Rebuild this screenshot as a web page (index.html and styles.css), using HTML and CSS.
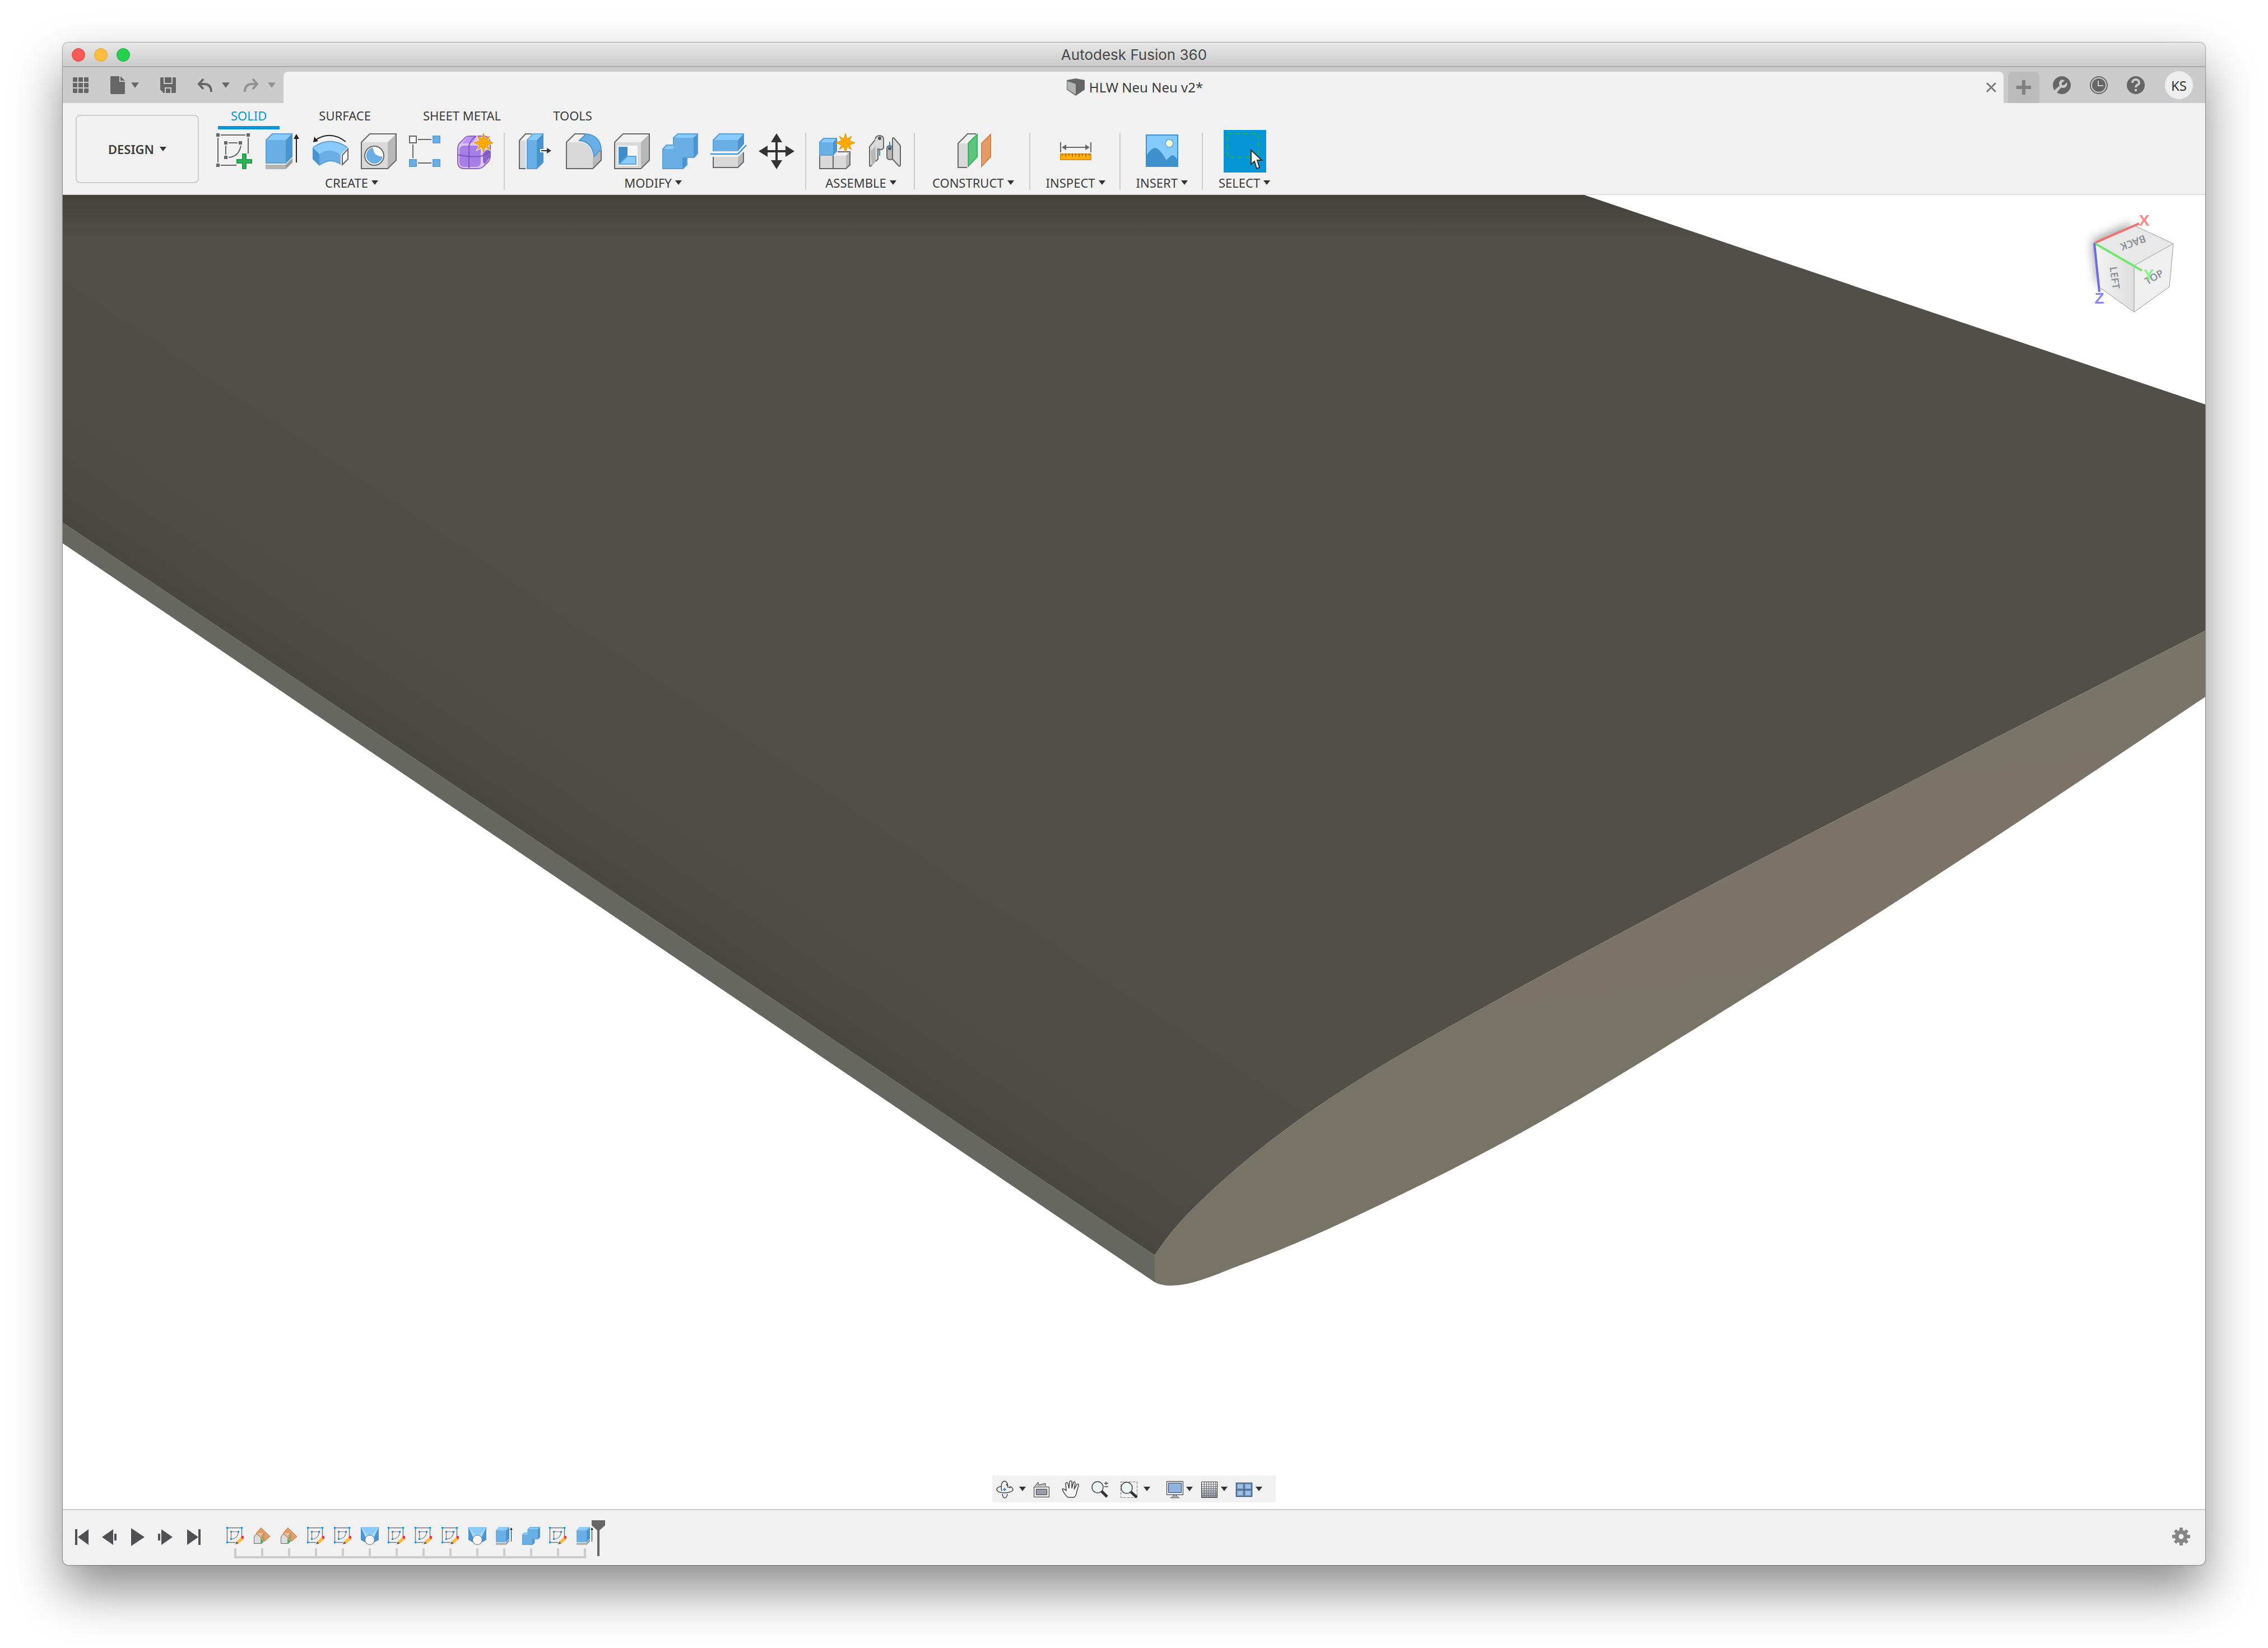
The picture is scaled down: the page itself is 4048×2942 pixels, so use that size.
FILE: index.html
```html
<!DOCTYPE html>
<html lang="en">
<head>
    <meta charset="UTF-8">
    <meta name="viewport" content="width=device-width, initial-scale=1.0">
    <title>Autodesk Fusion 360</title>
    <link rel="stylesheet" href="styles.css">
</head>
<body>
    <!-- shared icons -->
    <svg class="icon-defs" aria-hidden="true">
        <symbol id="caret" viewBox="0 0 12 8"><path d="M0 0H12L6 8Z" fill="currentColor"/></symbol>
        <symbol id="star" viewBox="0 0 34 34">
            <path d="M17 0L20 10L28 5L24 13L34 17L24 21L28 29L20 24L17 34L14 24L6 29L10 21L0 17L10 13L6 5L14 10Z" fill="#ffa800" stroke="#e39400"/>
        </symbol>
        <symbol id="extrude" viewBox="0 0 64 64">
            <path d="M2 12L14 0H50L38 12Z" fill="#8acbff"/>
            <path d="M2 12H38V54H2Z" fill="#69afe5"/>
            <path d="M38 12L50 0V42L38 54Z" fill="#4794cf"/>
            <path d="M3 53V12L14 1H49" fill="none" stroke="#5a9fd6" stroke-width="2"/>
            <path d="M2 53H38" stroke="#5a9fd6" stroke-width="2"/>
            <path d="M2 56H38V64H2Z" fill="#b3b3b3"/>
            <path d="M38 56L50 44V52L38 64Z" fill="#999"/>
            <path d="M57 8V52" stroke="#222" stroke-width="2"/>
            <path d="M57 1L62 10H52Z" fill="#222"/>
        </symbol>
        <symbol id="combine" viewBox="0 0 64 64">
            <path d="M0 28L7 20H20V8L28 0H64V36L57 43H44V56L37 64H0Z" fill="#69afe5"/>
            <path d="M0 28L7 20H20V28ZM20 8L28 0H64L56 8Z" fill="#8acbff"/>
            <path d="M56 8L64 0V36L56 44ZM36 43H44V56L36 64Z" fill="#4794cf"/>
            <path d="M1 28L8 21H20V8L28 1H63V36L57 43H44V56L37 63H1Z" fill="none" stroke="#5a9fd6" stroke-width="2"/>
        </symbol>
        <symbol id="t-sketch" viewBox="0 0 32 32">
            <path d="M3 1.500H26M1.500 3V26M27.500 3V18M3 27.500H16" fill="none" stroke="#777" stroke-width="1.500"/>
            <path d="M10 8.500H20M8.500 10V20M21.500 10Q20 20 10 21.500" fill="none" stroke="#777" stroke-width="1.200"/>
            <path d="M0 0H3V3H0ZM26 0H29V3H26ZM0 26H3V29H0ZM7 7H10V10H7ZM20 7H23V10H20ZM7 20H10V23H7Z" fill="#1292ef"/>
            <path d="M18 26L26 18L30 22L22 30Z" fill="#fdb93a"/>
            <path d="M26 18Q29 14 31 17Q32 20 29 22Z" fill="#f23030"/>
            <path d="M18 26L22 29L16 31Z" fill="#555"/>
        </symbol>
        <symbol id="t-plane" viewBox="0 0 32 32">
            <path d="M1.500 29.500V18L5 13H14V29.500Z" fill="#ddd" stroke="#666"/>
            <path d="M14 1L30 17L20 26L5 11Z" fill="#e69a66" stroke="#cf8550"/>
            <path d="M7 11H20L14 18Z" fill="#e8c5ac"/>
            <path d="M20 11V26L14 18Z" fill="#93a96b"/>
            <path d="M14 16L20 10M14 22L18 26L14 30Z" fill="#45b86e" stroke="#2fae5d"/>
        </symbol>
        <symbol id="t-loft" viewBox="0 0 32 32">
            <path d="M0 0H32V23L25 27H7L0 23Z" fill="#4794cf"/>
            <path d="M0 0H32L22 16H10Z" fill="#8acbff"/>
            <path d="M0 0L10 22L14 15ZM32 0L22 22L18 15Z" fill="#a5d8ff"/>
            <circle cx="16" cy="23" r="8.500" fill="#f5f5f5" stroke="#666"/>
        </symbol>
        <symbol id="t-extrude" viewBox="0 0 32 32">
            <path d="M1 6L6 0H25L19 6Z" fill="#8acbff"/>
            <path d="M1 6H19V27H1Z" fill="#69afe5"/>
            <path d="M19 6L25 0V21L19 27Z" fill="#4794cf"/>
            <path d="M1 28H19V32H1Z" fill="#b3b3b3"/>
            <path d="M19 28L25 22V26L19 32Z" fill="#999"/>
            <path d="M28.500 3V26" stroke="#222"/>
            <path d="M28.500 1L31 5H26Z" fill="#222"/>
        </symbol>
    </svg>

    <div class="window">
        <header class="titlebar">
            <div class="lights">
                <button class="light light-close" aria-label="Close window"></button>
                <button class="light light-min" aria-label="Minimize window"></button>
                <button class="light light-max" aria-label="Zoom window"></button>
            </div>
            <h1>Autodesk Fusion 360</h1>
        </header>

        <div class="appbar">
            <div class="quick">
                <button aria-label="Data panel">
                    <svg class="icon-32" viewBox="0 0 32 32"><path d="M4 2H10V10H2V4Q2 2 4 2ZM12 2H20V10H12ZM22 2H28Q30 2 30 4V10H22ZM2 12H10V20H2ZM12 12H20V20H12ZM22 12H30V20H22ZM2 22H10V30H4Q2 30 2 28ZM12 22H20V30H12ZM22 22H30V28Q30 30 28 30H22Z" fill="#666"/></svg>
                </button>
                <button class="file-button" aria-label="File">
                    <svg class="icon-32" viewBox="0 0 32 32"><path d="M5 0H19V10H29V30Q29 32 27 32H5Q3 32 3 30V2Q3 0 5 0ZM21 0L29 8H21Z" fill="#666"/></svg>
                    <svg class="caret-big"><use href="#caret"/></svg>
                </button>
                <button aria-label="Save">
                    <svg class="icon-32" viewBox="0 0 32 32">
                        <path d="M4 2H28Q30 2 30 4V28Q30 30 28 30H8L2 24V4Q2 2 4 2Z" fill="#666"/>
                        <path d="M9 2V13H23V2M11 30V21H21V30" fill="none" stroke="#ccc" stroke-width="2"/>
                    </svg>
                </button>
                <div class="history">
                    <button aria-label="Undo">
                        <svg class="icon-32" viewBox="0 0 32 32"><path d="M13 5L5 14L13 23M5 14H14C23 14 27 19 27 28" fill="none" stroke="#666" stroke-width="4"/></svg>
                        <svg class="caret-big"><use href="#caret"/></svg>
                    </button>
                    <button class="faded" aria-label="Redo">
                        <svg class="icon-32" viewBox="0 0 32 32"><path d="M19 5L27 14L19 23M27 14H18C9 14 5 19 5 28" fill="none" stroke="#929292" stroke-width="4"/></svg>
                        <svg class="caret-big"><use href="#caret"/></svg>
                    </button>
                </div>
            </div>
            <div class="doc-tab">
                <div class="doc-title">
                    <svg class="icon-32" viewBox="0 0 32 32">
                        <path d="M0 3L16 0L32 3V20L16 31L0 20Z" fill="#666"/>
                        <path d="M1 5L16 10V29L1 19Z" fill="#b3b5b5"/>
                    </svg>
                    <span>HLW Neu Neu v2*</span>
                </div>
                <button class="doc-close" aria-label="Close document">
                    <svg viewBox="0 0 18 18"><path d="M2 2L16 16M16 2L2 16" stroke="#777" stroke-width="3" stroke-linecap="round"/></svg>
                </button>
            </div>
            <button class="new-tab" aria-label="New tab">
                <svg viewBox="0 0 26 26"><path d="M10 0H16V10H26V16H16V26H10V16H0V10H10Z" fill="#808080"/></svg>
            </button>
            <div class="account">
                <button aria-label="Extensions">
                    <svg class="icon-32" viewBox="0 0 32 32">
                        <circle cx="16" cy="16" r="16" fill="#666"/>
                        <path d="M0 32L4 24L12 17Q9 11 14 7Q18 5 21 8L16 12V16H20L25 11Q27 17 22 20Q18 22 15 20L8 28L6 32Z" fill="#ccc"/>
                    </svg>
                </button>
                <button aria-label="Job status">
                    <svg class="icon-32" viewBox="0 0 32 32">
                        <circle cx="16" cy="16" r="15" fill="none" stroke="#666" stroke-width="2"/>
                        <circle cx="16" cy="16" r="12" fill="#666"/>
                        <path d="M15 8V17H24" fill="none" stroke="#ccc" stroke-width="2"/>
                    </svg>
                </button>
                <button aria-label="Help">
                    <svg class="icon-32" viewBox="0 0 32 32">
                        <circle cx="16" cy="16" r="16" fill="#666"/>
                        <path d="M10 12C10 4 22 4 22 12C22 16 16 15 16 20" fill="none" stroke="#ccc" stroke-width="4"/>
                        <path d="M14 23H18V27H14Z" fill="#ccc"/>
                    </svg>
                </button>
                <button class="avatar">KS</button>
            </div>
        </div>

        <div class="ribbon">
            <button class="workspace">DESIGN <svg class="caret"><use href="#caret"/></svg></button>
            <div class="ribbon-main">
                <nav class="ribbon-tabs">
                    <a href="#solid" class="active">SOLID</a>
                    <a href="#surface">SURFACE</a>
                    <a href="#sheet-metal">SHEET METAL</a>
                    <a href="#tools">TOOLS</a>
                </nav>
                <div class="ribbon-groups">
                    <section class="group group-wide">
                        <div class="group-icons">
                            <button aria-label="Create sketch">
                                <svg viewBox="0 0 64 64">
                                    <path d="M8 3H52M3 8V52M57 8V36M8 57H36M22 17H38M17 22V38M44 22Q40 42 22 43" fill="none" stroke="#666" stroke-width="2"/>
                                    <path d="M0 0H6V6H0ZM54 0H60V6H54ZM0 54H6V60H0ZM14 14H20V20H14ZM40 14H46V20H40ZM14 40H20V46H14Z" fill="#666"/>
                                    <path d="M47 37H53V47H63V53H53V63H47V53H37V47H47Z" fill="#2bb35a" stroke="#1f9e47" stroke-width="2"/>
                                </svg>
                            </button>
                            <button aria-label="Extrude"><svg><use href="#extrude"/></svg></button>
                            <button aria-label="Revolve">
                                <svg viewBox="0 0 64 64">
                                    <path d="M0 25Q31 3 63 25L50 38Q31 23 12 37Z" fill="#8acbff"/>
                                    <path d="M12 37Q31 23 50 38V56Q31 43 12 58Z" fill="#69afe5"/>
                                    <path d="M0 25L12 37V58L0 46Z" fill="#4794cf"/>
                                    <path d="M1 25Q31 4 62 25M12 57Q31 42 50 55" fill="none" stroke="#5a9fd6" stroke-width="2"/>
                                    <path d="M53 39L63 28V46L53 56Z" fill="#fff" stroke="#666" stroke-width="2"/>
                                    <path d="M59 15Q32 -6 5 12" fill="none" stroke="#222" stroke-width="2"/>
                                    <path d="M1 16L3 6L10 14Z" fill="#222"/>
                                </svg>
                            </button>
                            <button aria-label="Hole">
                                <svg viewBox="0 0 64 64">
                                    <path d="M1 16L16 1H63V48L48 63H1Z" fill="#f1f1f1"/>
                                    <path d="M1 16H48V63H1Z" fill="#d9d9d9"/>
                                    <path d="M48 16L63 1V48L48 63Z" fill="#b8b8b8"/>
                                    <path d="M1 16L16 1H63V48L48 63H1Z" fill="none" stroke="#666" stroke-width="2"/>
                                    <circle cx="24" cy="40" r="17" fill="#fff" stroke="#666" stroke-width="2"/>
                                    <path d="M21 26A14 14 0 1 0 38 42C28 42 22 36 21 26Z" fill="#69afe5" stroke="#5a9fd6"/>
                                </svg>
                            </button>
                            <button aria-label="Pattern">
                                <svg viewBox="0 0 64 64">
                                    <path d="M16 11H40M7 20V44M16 53H40" stroke="#666" stroke-width="2"/>
                                    <path d="M1 5H13V17H1Z" fill="#fff" stroke="#666" stroke-width="2"/>
                                    <path d="M43 5H55V17H43ZM1 47H13V59H1ZM43 47H55V59H43Z" fill="#69afe5" stroke="#5a9fd6" stroke-width="2"/>
                                </svg>
                            </button>
                            <button aria-label="Create form">
                                <svg viewBox="0 0 64 64">
                                    <path d="M1 28Q1 20 6 16L15 7Q18 5 22 5H50Q59 8 59 18V42Q59 46 56 50L46 60Q42 63 38 63H13Q1 63 1 51Z" fill="#dcc6f7" stroke="#8f63c4" stroke-width="2"/>
                                    <path d="M8 18L16 9Q19 6 24 6H34Q30 17 24 18Z" fill="#bf93ff"/>
                                    <rect x="4" y="22" width="38" height="38" rx="8" fill="#a77de6"/>
                                    <path d="M46 34L59 26V42L50 54Q46 55 46 48Z" fill="#8b62c9"/>
                                    <path d="M1 38Q20 43 42 41Q52 38 58 32M21 62V24Q22 12 34 5" fill="none" stroke="#7f55b8" stroke-width="2"/>
                                    <path d="M47 -2L51 9L61 3L56 13L66 17L56 22L60 32L51 27L47 36L43 27L33 32L38 22L28 17L38 13L33 3L43 9Z" fill="#f1f1f1"/>
                                    <use href="#star" x="30" y="0" width="34" height="34"/>
                                </svg>
                            </button>
                        </div>
                        <button class="group-label">CREATE <svg class="caret"><use href="#caret"/></svg></button>
                    </section>
                    <section class="group group-wide">
                        <div class="group-icons">
                            <button aria-label="Press pull">
                                <svg viewBox="0 0 64 64">
                                    <path d="M3 13H14V63H3Z" fill="#d9d9d9"/>
                                    <path d="M14 63H3V13L14 1H25" fill="none" stroke="#666" stroke-width="2"/>
                                    <path d="M16 12L27 0H46L34 12Z" fill="#8acbff"/>
                                    <path d="M16 12H34V64H16Z" fill="#69afe5"/>
                                    <path d="M34 12L46 0V52L34 64Z" fill="#4794cf"/>
                                    <path d="M17 63V12L27 1H45V52L34 63Z" fill="none" stroke="#4f97d0" stroke-opacity=".6" stroke-width="2"/>
                                    <path d="M40 28H47V34H40Z" fill="#fff"/>
                                    <path d="M42 31H54" stroke="#333" stroke-width="2"/>
                                    <path d="M52 26L60 31L52 36Z" fill="#333"/>
                                </svg>
                            </button>
                            <button aria-label="Fillet">
                                <svg viewBox="0 0 64 64">
                                    <path d="M48 44L63 29V48L48 63Z" fill="#b8b8b8"/>
                                    <path d="M1 16H24C40 16 48 30 48 44V63H1Z" fill="#d9d9d9"/>
                                    <path d="M34 1H16L1 16V63H48L63 48V30" fill="none" stroke="#666" stroke-width="2"/>
                                    <path d="M36 1C54 3 62 14 63 28L50 42C49 28 42 14 24 13Z" fill="#69afe5" stroke="#4f97d0" stroke-width="2"/>
                                </svg>
                            </button>
                            <button aria-label="Shell">
                                <svg viewBox="0 0 64 64">
                                    <path d="M1 16L16 1H63V48L48 63H1Z" fill="#f1f1f1"/>
                                    <path d="M1 16H48V63H1Z" fill="#d9d9d9"/>
                                    <path d="M48 16L63 1V48L48 63Z" fill="#b8b8b8"/>
                                    <path d="M1 16L16 1H63V48L48 63H1Z" fill="none" stroke="#666" stroke-width="2"/>
                                    <path d="M6 22H42V58H6Z" fill="#f6f6f6"/>
                                    <path d="M8 24H24V40L8 56Z" fill="#3f8cc8"/>
                                    <path d="M9 55L24 41H39V55Z" fill="#8acbff" stroke="#5fa9e0" stroke-width="2"/>
                                </svg>
                            </button>
                            <button aria-label="Combine"><svg><use href="#combine"/></svg></button>
                            <button aria-label="Split body">
                                <svg viewBox="0 0 64 64">
                                    <path d="M4 12L16 0H60L49 12Z" fill="#8acbff"/>
                                    <path d="M4 12H49V32H4Z" fill="#69afe5"/>
                                    <path d="M49 12L60 0V19L49 32Z" fill="#4794cf"/>
                                    <path d="M5 32V12L16 1H59" fill="none" stroke="#5a9fd6" stroke-width="2"/>
                                    <path d="M5 42H49V61H5Z" fill="#d9d9d9"/>
                                    <path d="M49 42L59 33V51L49 61Z" fill="#b8b8b8"/>
                                    <path d="M5 42V61H49L59 51V34" fill="none" stroke="#666" stroke-width="2"/>
                                    <path d="M0 37H49L64 21" fill="none" stroke="#1c8fe6" stroke-width="2"/>
                                </svg>
                            </button>
                            <button aria-label="Move">
                                <svg viewBox="0 0 64 64">
                                    <path d="M32 8V56M8 32H56" stroke="#333" stroke-width="4"/>
                                    <path d="M32 0L42 16H22ZM32 64L42 48H22ZM0 32L16 22V42ZM64 32L48 22V42Z" fill="#333"/>
                                </svg>
                            </button>
                        </div>
                        <button class="group-label">MODIFY <svg class="caret"><use href="#caret"/></svg></button>
                    </section>
                    <section class="group">
                        <div class="group-icons">
                            <button aria-label="New component">
                                <svg viewBox="0 0 64 64">
                                    <path d="M1 40H25L33 33H56V56L48 63H1Z" fill="#d9d9d9"/>
                                    <path d="M25 40L33 33H55L48 40Z" fill="#f1f1f1"/>
                                    <path d="M48 40L55 33V56L48 63Z" fill="#b8b8b8"/>
                                    <path d="M1 40V63H48L55 56V33H33M25 40V63" fill="none" stroke="#666" stroke-width="2"/>
                                    <path d="M0 16L8 8H32L25 16Z" fill="#8acbff"/>
                                    <path d="M0 16H25V40H0Z" fill="#69afe5"/>
                                    <path d="M25 16L32 8V32L25 40Z" fill="#4794cf"/>
                                    <path d="M1 39V16L8 9H31M1 39H25" fill="none" stroke="#5a9fd6" stroke-width="2"/>
                                    <use href="#star" x="30" y="0" width="34" height="34"/>
                                </svg>
                            </button>
                            <button aria-label="Joint">
                                <svg viewBox="0 0 64 64">
                                    <path d="M4 24L16 9V47L7 58Q4 60 4 57Z" fill="#d9d9d9" stroke="#666" stroke-width="2"/>
                                    <path d="M6 32L19 18V46L8 58Z" fill="#b8b8b8"/>
                                    <path d="M14 10Q16 4 22 4Q29 5 29 10V26Q28 29 24 29L19 28V46L15 50" fill="#d9d9d9" stroke="#666" stroke-width="2"/>
                                    <circle cx="22" cy="9" r="3" fill="#555"/>
                                    <path d="M45 9Q46 7 48 9L59 22V57Q58 60 56 58L45 46Z" fill="#d9d9d9" stroke="#666" stroke-width="2"/>
                                    <path d="M35 26Q36 22 40 22Q45 23 45 26V46Q41 48 37 46Q35 45 35 42Z" fill="#b8b8b8" stroke="#666" stroke-width="2"/>
                                    <circle cx="40" cy="27" r="3" fill="#555"/>
                                    <path d="M22 29V40M40 15V26" stroke="#1c8fe6" stroke-width="2"/>
                                </svg>
                            </button>
                        </div>
                        <button class="group-label">ASSEMBLE <svg class="caret"><use href="#caret"/></svg></button>
                    </section>
                    <section class="group group-construct">
                        <div class="group-icons">
                            <button aria-label="Offset plane">
                                <svg viewBox="0 0 64 64">
                                    <path d="M5 18H21V61H5Z" fill="#d9d9d9"/>
                                    <path d="M21 61H5V18L22 1H37" fill="none" stroke="#666" stroke-width="2"/>
                                    <path d="M23 18L39 2V42L23 59Z" fill="#5ac77d" stroke="#3fae65" stroke-width="2"/>
                                    <path d="M47 18L63 2V42L47 59Z" fill="#e69a66" stroke="#cf8550" stroke-width="2"/>
                                </svg>
                            </button>
                        </div>
                        <button class="group-label">CONSTRUCT <svg class="caret"><use href="#caret"/></svg></button>
                    </section>
                    <section class="group">
                        <div class="group-icons">
                            <button aria-label="Measure">
                                <svg viewBox="0 0 64 64">
                                    <path d="M5 16V34M59 16V34M12 25H52" stroke="#666" stroke-width="2"/>
                                    <path d="M7 25L15 20V30ZM57 25L49 20V30Z" fill="#666"/>
                                    <path d="M5 37H59V47H5Z" fill="#ffae0c" stroke="#e39400" stroke-width="2"/>
                                    <path d="M8 36V40M14 36V42M20 36V40M26 36V42M32 36V40M38 36V42M44 36V40M50 36V42M56 36V40" stroke="#444"/>
                                </svg>
                            </button>
                        </div>
                        <button class="group-label">INSPECT <svg class="caret"><use href="#caret"/></svg></button>
                    </section>
                    <section class="group">
                        <div class="group-icons">
                            <button aria-label="Insert image">
                                <svg viewBox="0 0 64 64">
                                    <path d="M3 2H61V60H3Z" fill="#85caff"/>
                                    <path d="M3 42Q12 26 20 26Q28 27 40 48Q48 38 52 39Q57 42 61 50V60H3Z" fill="#3d92ce"/>
                                    <path d="M4 42V3H60V50" fill="none" stroke="#3d92ce" stroke-width="2"/>
                                    <circle cx="45" cy="18" r="7" fill="#fffbc8" stroke="#69afe5" stroke-width="2"/>
                                </svg>
                            </button>
                        </div>
                        <button class="group-label">INSERT <svg class="caret"><use href="#caret"/></svg></button>
                    </section>
                    <section class="group">
                        <div class="group-icons">
                            <button class="selected" aria-label="Select">
                                <svg viewBox="0 0 76 76">
                                    <rect x="7" y="7" width="55" height="42" fill="none" stroke="#23b33f" stroke-width="2" stroke-dasharray="8 6"/>
                                    <path d="M49 36V61L55 56L59 69L64 67L60 54H68Z" fill="#fff" stroke="#333" stroke-width="2"/>
                                </svg>
                            </button>
                        </div>
                        <button class="group-label">SELECT <svg class="caret"><use href="#caret"/></svg></button>
                    </section>
                </div>
            </div>
        </div>

        <main class="viewport">
            <svg class="model" viewBox="0 0 3824 2346" role="img" aria-label="Wing model">
                <defs>
                    <linearGradient id="skin" gradientUnits="userSpaceOnUse" x1="975" y1="1239" x2="1210" y2="889">
                        <stop offset="0" stop-color="#494742"/>
                        <stop offset=".4" stop-color="#4e4d47"/>
                        <stop offset="1" stop-color="#524f48"/>
                    </linearGradient>
                    <linearGradient id="topshade" x1="0" y1="0" x2="0" y2="1">
                        <stop offset="0" stop-color="#44413b"/>
                        <stop offset="1" stop-color="#44413b" stop-opacity="0"/>
                    </linearGradient>
                    <linearGradient id="section" gradientUnits="userSpaceOnUse" x1="3447" y1="945" x2="3509" y2="1420">
                        <stop offset=".1" stop-color="#787468"/>
                        <stop offset=".25" stop-color="#7b7367"/>
                        <stop offset=".78" stop-color="#7b7367"/>
                        <stop offset=".84" stop-color="#777367"/>
                    </linearGradient>
                </defs>
                <path d="M0 585L1949 1893V1941L0 622Z" fill="#666761"/>
                <path d="M1949 1893C1981 1844 2013 1813 2045 1783C2118 1715 2190 1660 2263 1612C2358 1549 2453 1497 2548 1444C2663 1380 2778 1319 2893 1258C3014 1194 3136 1131 3257 1069C3446 971 3635 874 3824 778V374L2715 0H0V585Z" fill="url(#skin)"/>
                <path d="M0 0H2715L2952 80H0Z" fill="url(#topshade)"/>
                <path d="M1949 1893C1981 1844 2013 1813 2045 1783C2118 1715 2190 1660 2263 1612C2358 1549 2453 1497 2548 1444C2663 1380 2778 1319 2893 1258C3014 1194 3136 1131 3257 1069C3446 971 3635 874 3824 778V896C3696 982 3567 1069 3439 1153C3293 1249 3148 1342 3002 1433C2869 1516 2736 1600 2603 1674C2498 1732 2392 1784 2287 1833C2227 1861 2166 1887 2106 1909C2063 1925 2018 1947 1978 1947Q1960 1947 1949 1941Z" fill="url(#section)"/>
            </svg>

            <svg class="viewcube" viewBox="0 0 200 200" role="img" aria-label="View cube">
                <defs>
                    <filter id="cube-shadow" x="-50%" y="-50%" width="200%" height="200%"><feGaussianBlur stdDeviation="9"/></filter>
                    <linearGradient id="cube-left"><stop offset="0" stop-color="#f4f4f4"/><stop offset="1" stop-color="#dedede"/></linearGradient>
                </defs>
                <path d="M34 60L104 28L100 100L44 140Z" fill="#000" opacity=".4" filter="url(#cube-shadow)"/>
                <path d="M38 64L110 33L179 65L109 104Z" fill="#e8e8e8"/>
                <path d="M38 64L109 104V187L46 142Z" fill="url(#cube-left)"/>
                <path d="M109 104L179 65L172 142L109 187Z" fill="#efefef"/>
                <path d="M110 33L179 65L172 142L109 187L46 142M109 104L179 65M109 104V187" fill="none" stroke="#999" stroke-width="1"/>
                <g class="cube-face">
                    <text transform="translate(107 63) rotate(160)" y="6">BACK</text>
                    <text transform="translate(74 126) rotate(82)" y="6">LEFT</text>
                    <text transform="translate(145 125) rotate(-30)" y="6">TOP</text>
                </g>
                <path d="M38 64L118 29" stroke="#f07070" stroke-width="4"/>
                <path d="M38 64L123 113" stroke="#6fe86f" stroke-width="4"/>
                <path d="M38 64L47 151" stroke="#6a6aee" stroke-width="4"/>
                <g class="cube-axis">
                    <text x="127" y="33" fill="#ff8585">X</text>
                    <text x="135" y="130" fill="#85f585">Y</text>
                    <text x="47" y="172" fill="#8585ff">Z</text>
                </g>
            </svg>

            <div class="navbar">
                <div class="nav-set">
                    <button aria-label="Orbit">
                        <svg class="icon-32" viewBox="0 0 32 32">
                            <path d="M11 11Q2 13 2 17Q3 23 16 23Q31 22 31 17Q30 13 26 12M11 20Q8 3 16 2Q22 3 22 14M12 25Q13 32 16 32Q20 32 21 25" fill="none" stroke="#444" stroke-width="1.500"/>
                            <path d="M16 14V20M13 17H19" stroke="#1080e0" stroke-width="1.500"/>
                            <path d="M18 8L22 7L21 11ZM23 13L27 11L26 15Z" fill="#333"/>
                        </svg>
                        <svg class="caret"><use href="#caret"/></svg>
                    </button>
                    <div class="nav-plain">
                        <button aria-label="Look at">
                            <svg class="icon-32" viewBox="0 0 32 32">
                                <path d="M4 11L10 4L11 9L23 6V11" fill="#bbb" stroke="#444"/>
                                <path d="M2.500 12.500H29.500V30.500H2.500Z" fill="#e8e8e8" stroke="#333"/>
                                <path d="M6.500 16.500H25.500V26.500H6.500Z" fill="#9a9da6" stroke="#444"/>
                            </svg>
                        </button>
                        <button aria-label="Pan">
                            <svg class="icon-32" viewBox="0 0 32 32"><path d="M11 31Q5 26 1 17Q2 14 8 19L7 6Q9 3 11 6L13 15L14 3Q16 0 18 3V15L21 4Q24 2 24 6L22 17L27 8Q31 6 30 10L27 20Q26 28 22 31Z" fill="#f8f8fa" stroke="#444" stroke-width="1.500"/></svg>
                        </button>
                        <button aria-label="Zoom">
                            <svg class="icon-32" viewBox="0 0 32 32">
                                <path d="M19 20L29 30" stroke="#333" stroke-width="5"/>
                                <circle cx="12" cy="13" r="10" fill="#e8f4f4" stroke="#444" stroke-width="1.500"/>
                                <path d="M27 3V9M24 6H31M24 12H31" stroke="#444" stroke-width="1.500"/>
                            </svg>
                        </button>
                        <button aria-label="Fit">
                            <svg class="icon-32" viewBox="0 0 32 32">
                                <rect x="1.500" y="3.500" width="29" height="28" fill="none" stroke="#777" stroke-dasharray="5 2"/>
                                <path d="M19 21L30 31" stroke="#333" stroke-width="5"/>
                                <circle cx="12" cy="14" r="10" fill="#e8f4f4" stroke="#444" stroke-width="1.500"/>
                            </svg>
                            <svg class="caret"><use href="#caret"/></svg>
                        </button>
                    </div>
                </div>
                <div class="nav-set nav-display">
                    <button aria-label="Display settings">
                        <svg class="icon-32" viewBox="0 0 32 32">
                            <path d="M13 26H19V29L24 32H8L13 29Z" fill="#aab" stroke="#666"/>
                            <path d="M1.500 2.500H30.500V26.500H1.500Z" fill="#e4e6ea" stroke="#333"/>
                            <path d="M4.500 5.500H27.500V22.500H4.500Z" fill="#8fb3dc" stroke="#28456f"/>
                        </svg>
                        <svg class="caret"><use href="#caret"/></svg>
                    </button>
                    <button aria-label="Grid and snaps">
                        <svg class="icon-32" viewBox="0 0 32 32">
                            <defs><linearGradient id="gridfill" x1="0" y1="0" x2="0" y2="1"><stop offset="0" stop-color="#fff"/><stop offset="1" stop-color="#8e919c"/></linearGradient></defs>
                            <path d="M1.500 3.500H29.500V31.500H1.500Z" fill="url(#gridfill)"/>
                            <path d="M6.500 3V31M10.500 3V31M14.500 3V31M18.500 3V31M22.500 3V31M26.500 3V31M1 7.500H29M1 11.500H29M1 15.500H29M1 19.500H29M1 23.500H29M1 27.500H29" stroke="#777"/>
                            <path d="M1.500 3.500H29.500V31.500H1.500Z" fill="none" stroke="#333"/>
                        </svg>
                        <svg class="caret"><use href="#caret"/></svg>
                    </button>
                    <button aria-label="Viewports">
                        <svg class="icon-32" viewBox="0 0 32 32">
                            <path d="M1.500 5.500H29.500V29.500H1.500ZM15.500 5V30M1 17.500H30" fill="#8fb3dc" stroke="#2c4a78" stroke-width="1.500"/>
                            <path d="M3.500 7.500H13.500V15.500H3.500ZM17.500 7.500H27.500V15.500H17.500ZM3.500 19.500H13.500V27.500H3.500ZM17.500 19.500H27.500V27.500H17.500Z" fill="#a3c0e2" stroke="#6f93c2"/>
                        </svg>
                        <svg class="caret"><use href="#caret"/></svg>
                    </button>
                </div>
            </div>
        </main>

        <footer class="timeline">
            <div class="playback">
                <button aria-label="Go to start"><svg class="icon-32" viewBox="0 0 32 32"><path d="M4 2H8V30H4ZM28 2V30L9 16Z" fill="#505052"/></svg></button>
                <button aria-label="Step back"><svg class="icon-32" viewBox="0 0 32 32"><path d="M2 16L22 2V30ZM24 10H28V22H24Z" fill="#505052"/></svg></button>
                <button aria-label="Play"><svg class="icon-32" viewBox="0 0 32 32"><path d="M4 0L28 16L4 32Z" fill="#505052"/></svg></button>
                <button aria-label="Step forward"><svg class="icon-32" viewBox="0 0 32 32"><path d="M2 10H6V22H2ZM8 2L28 16L8 30Z" fill="#505052"/></svg></button>
                <button aria-label="Go to end"><svg class="icon-32" viewBox="0 0 32 32"><path d="M4 2L24 16L4 30ZM24 2H28V30H24Z" fill="#505052"/></svg></button>
            </div>
            <ol class="features">
                <li><svg class="icon-32"><use href="#t-sketch"/></svg></li>
                <li><svg class="icon-32"><use href="#t-plane"/></svg></li>
                <li><svg class="icon-32"><use href="#t-plane"/></svg></li>
                <li><svg class="icon-32"><use href="#t-sketch"/></svg></li>
                <li><svg class="icon-32"><use href="#t-sketch"/></svg></li>
                <li><svg class="icon-32"><use href="#t-loft"/></svg></li>
                <li><svg class="icon-32"><use href="#t-sketch"/></svg></li>
                <li><svg class="icon-32"><use href="#t-sketch"/></svg></li>
                <li><svg class="icon-32"><use href="#t-sketch"/></svg></li>
                <li><svg class="icon-32"><use href="#t-loft"/></svg></li>
                <li><svg class="icon-32"><use href="#t-extrude"/></svg></li>
                <li><svg class="icon-32"><use href="#combine"/></svg></li>
                <li><svg class="icon-32"><use href="#t-sketch"/></svg></li>
                <li><svg class="icon-32"><use href="#t-extrude"/></svg></li>
            </ol>
            <svg class="marker" viewBox="0 0 24 64"><path d="M0 0H24V9L14 18V64H10V18L0 9Z" fill="#666"/></svg>
            <button class="settings" aria-label="Timeline settings">
                <svg class="icon-32" viewBox="0 0 32 32">
                    <path d="M16 0V32M0 16H32M5 5L27 27M27 5L5 27" stroke="#858585" stroke-width="6"/>
                    <circle cx="16" cy="16" r="8" fill="#f1f1f1" stroke="#858585" stroke-width="7"/>
                </svg>
            </button>
        </footer>
    </div>
</body>
</html>
```
FILE: styles.css
```css
* {
    box-sizing: border-box;
}

body {
    margin: 0;
    padding: 76px 112px 148px;
    background: #fff;
    color: #3c3c3c;
    font-family: "Noto Sans", "Open Sans", sans-serif;
    font-size: 22px;
}

button {
    display: flex;
    align-items: center;
    padding: 0;
    border: none;
    background: none;
    color: inherit;
    font: inherit;
    cursor: pointer;
}

svg {
    display: block;
    flex: none;
    overflow: visible;
}

.icon-defs {
    position: absolute;
    width: 0;
    height: 0;
}

.icon-32 {
    width: 32px;
    height: 32px;
}

.caret {
    width: 12px;
    height: 8px;
    color: #333;
}

.caret-big {
    width: 14px;
    height: 10px;
    color: #666;
}

.window {
    border-radius: 10px;
    background: #f1f1f1;
    box-shadow: 0 0 0 1px rgba(0, 0, 0, 0.2), 0 0 3px rgba(0, 0, 0, 0.3), 0 44px 90px rgba(0, 0, 0, 0.46);
}

/* title bar */
.titlebar {
    display: grid;
    grid-template-columns: 1fr auto 1fr;
    align-items: center;
    height: 44px;
    padding: 2px 16px 0;
    border-bottom: 2px solid #adadad;
    border-radius: 10px 10px 0 0;
    background: linear-gradient(#e8e8e8, #cbcbcb);
}

.titlebar h1 {
    margin: 0;
    color: #484848;
    font-family: Inter, sans-serif;
    font-size: 26px;
    font-weight: 400;
    line-height: 32px;
}

.lights {
    display: flex;
    gap: 16px;
}

.light {
    width: 24px;
    height: 24px;
    border: 1px solid #e2443f;
    border-radius: 50%;
    background: #ff5a56;
}

.light-min {
    border-color: #e2a032;
    background: #ffbd3e;
}

.light-max {
    border-color: #17ad38;
    background: #26cf4c;
}

/* quick access bar and document tab */
.appbar {
    display: flex;
    height: 64px;
    background: #ccc;
}

.quick {
    display: flex;
    align-items: center;
    gap: 34px;
    padding: 0 14px 0 16px;
}

.file-button {
    gap: 8px;
    padding-right: 2px;
}

.history {
    display: flex;
    gap: 22px;
}

.history button {
    gap: 14px;
}

.faded .caret-big {
    color: #929292;
}

.doc-tab {
    display: flex;
    flex: 1;
    margin-top: 8px;
    padding-right: 13px;
    border-radius: 8px 8px 0 0;
    background: #f1f1f1;
}

.doc-title {
    display: flex;
    flex: 1;
    align-items: center;
    justify-content: center;
    gap: 8px;
    font-size: 24px;
    line-height: 32px;
}

.doc-close {
    width: 18px;
}

.doc-close svg {
    width: 18px;
    height: 18px;
}

.new-tab {
    justify-content: center;
    width: 56px;
    margin: 8px 24px 0 8px;
    border-radius: 8px 8px 0 0;
    background: #bbb;
}

.new-tab svg {
    width: 26px;
    height: 26px;
}

.account {
    display: flex;
    align-items: center;
    gap: 34px;
    padding-right: 22px;
}

.avatar {
    justify-content: center;
    width: 50px;
    height: 50px;
    margin-left: 2px;
    border-radius: 50%;
    background: #eee;
    color: #333;
    font-size: 24px;
}

/* ribbon */
.ribbon {
    display: flex;
    gap: 31px;
    padding-left: 23px;
    border-bottom: 1px solid #ccc;
}

.workspace {
    justify-content: center;
    gap: 10px;
    width: 220px;
    height: 122px;
    margin-top: 21px;
    border: 2px solid #ccc;
    border-radius: 8px;
    font-weight: 600;
}

.ribbon-tabs {
    display: flex;
    gap: 47px;
    padding: 7px 0 0 3px;
}

.ribbon-tabs a {
    padding: 0 23px 4px;
    border-bottom: 6px solid transparent;
    color: inherit;
    line-height: 30px;
    text-decoration: none;
}

.ribbon-tabs .active {
    border-color: #0696d7;
    color: #0696d7;
}

.ribbon-groups {
    display: flex;
    padding: 6px 0 8px;
}

.group {
    display: flex;
    flex-direction: column;
    align-items: center;
    gap: 12px;
    padding: 1px 19px 1px 23px;
    border-right: 2px solid #ccc;
}

.group:first-child {
    padding-left: 0;
}

.group:last-child {
    border-right: none;
}

.group-icons {
    display: flex;
    gap: 22px;
}

.group-icons svg {
    width: 64px;
    height: 64px;
}

.group-icons .selected {
    margin: -6px;
    background: #0696d7;
}

.group-icons .selected svg {
    width: 76px;
    height: 76px;
}

.group-label {
    gap: 6px;
    padding: 0 6px 0 5px;
    line-height: 24px;
}

.group-wide .group-label {
    margin-right: 10px;
}

.group-construct .group-label {
    padding: 0 8px;
}

/* 3D view */
.viewport {
    position: relative;
    background: #fff;
}

.model {
    width: 100%;
    height: auto;
}

.viewcube {
    position: absolute;
    top: 22px;
    right: 36px;
    width: 200px;
    height: 200px;
}

.cube-face {
    fill: #8b9098;
    font-size: 18px;
    font-weight: 600;
    text-anchor: middle;
}

.cube-axis {
    font-family: "Liberation Sans", sans-serif;
    font-size: 28px;
    font-weight: 700;
    text-anchor: middle;
}

.navbar {
    position: absolute;
    bottom: 12px;
    left: 50%;
    display: flex;
    gap: 28px;
    height: 48px;
    padding: 0 24px 0 6px;
    background: #f1f1f1;
    transform: translateX(-50%);
}

.nav-set {
    display: flex;
    gap: 12px;
}

.nav-set button {
    gap: 10px;
}

.nav-plain {
    display: flex;
    gap: 20px;
}

.nav-display {
    gap: 14px;
}

.nav-display button {
    gap: 4px;
}

/* timeline */
.timeline {
    display: flex;
    align-items: flex-start;
    height: 100px;
    padding: 0 27px 0 18px;
    border-top: 2px solid #ccc;
}

.playback {
    display: flex;
    gap: 18px;
    padding-top: 32px;
}

.features {
    display: flex;
    margin: 0 0 0 34px;
    padding: 30px 0 0;
    list-style: none;
}

.features li {
    display: flex;
    flex-direction: column;
    align-items: center;
    gap: 6px;
    width: 48px;
}

.features li::after {
    content: "";
    align-self: stretch;
    height: 14px;
    border-bottom: 4px solid #ccc;
    background: linear-gradient(#ccc, #ccc) center / 4px 100% no-repeat;
}

.features li:first-child::after {
    margin-left: 22px;
    background-position: left;
}

.features li:last-child::after {
    margin-right: 22px;
    background-position: right;
}

.marker {
    width: 24px;
    height: 64px;
    margin: 18px 0 0 -12px;
}

.settings {
    margin: 31px 0 0 auto;
}
```
